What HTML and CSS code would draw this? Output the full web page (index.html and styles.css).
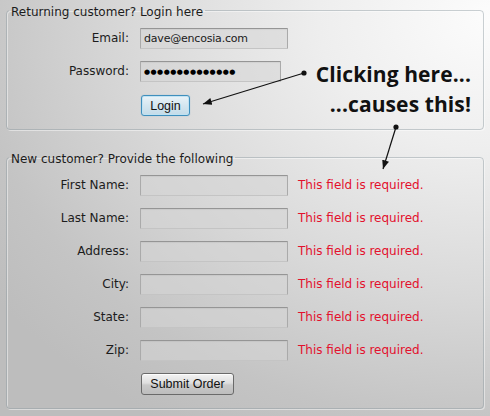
FILE: index.html
```html
<!DOCTYPE html>
<html>
<head>
<meta charset="utf-8">
<link rel="stylesheet" href="styles.css">
</head>
<body>
<div class="page">
  <fieldset class="box box-login">
    <legend>Returning customer? Login here</legend>
    <div class="grid">
      <label class="lbl">Email:</label>
      <input class="field" type="text" value="dave@encosia.com">
      <span></span>
      <label class="lbl">Password:</label>
      <input class="field field-pass" type="text" value="●●●●●●●●●●●●●●">
      <span></span>
      <span></span>
      <div class="btn-cell"><button class="btn btn-login">Login</button></div>
      <span></span>
    </div>
  </fieldset>

  <fieldset class="box box-new">
    <legend>New customer? Provide the following</legend>
    <div class="grid">
      <label class="lbl">First Name:</label>
      <input class="field" type="text">
      <span class="err">This field is required.</span>
      <label class="lbl">Last Name:</label>
      <input class="field" type="text">
      <span class="err">This field is required.</span>
      <label class="lbl">Address:</label>
      <input class="field" type="text">
      <span class="err">This field is required.</span>
      <label class="lbl">City:</label>
      <input class="field" type="text">
      <span class="err">This field is required.</span>
      <label class="lbl">State:</label>
      <input class="field" type="text">
      <span class="err">This field is required.</span>
      <label class="lbl">Zip:</label>
      <input class="field" type="text">
      <span class="err">This field is required.</span>
      <span></span>
      <div class="btn-cell"><button class="btn btn-submit">Submit Order</button></div>
      <span></span>
    </div>
  </fieldset>

  <div class="annot">
    <svg class="arrows" width="490" height="416" viewBox="0 0 490 416">
      <defs>
        <marker id="head" viewBox="0 0 10 8" refX="10" refY="4" markerWidth="9" markerHeight="7" markerUnits="userSpaceOnUse" orient="auto">
          <path d="M0 0 L10 4 L0 8 Z" fill="#111"/>
        </marker>
      </defs>
      <line x1="304" y1="73" x2="203" y2="104" stroke="#111" stroke-width="1.2" marker-end="url(#head)"/>
      <circle cx="304" cy="73" r="2.6" fill="#111"/>
      <line x1="396" y1="127" x2="383" y2="169" stroke="#111" stroke-width="1.2" marker-end="url(#head)"/>
      <circle cx="396" cy="127" r="2.6" fill="#111"/>
    </svg>
    <div class="callout">
      <div>Clicking here...</div>
      <div>...causes this!</div>
    </div>
  </div>
</div>
</body>
</html>
```

FILE: styles.css
```css
html, body {
  margin: 0;
  padding: 0;
}
body {
  width: 490px;
  height: 416px;
  overflow: hidden;
  font-family: "DejaVu Sans", Verdana, sans-serif;
  font-size: 12px;
  color: #1c1c1c;
  background: radial-gradient(ellipse 125% 115% at 100% 4%, #fcfcfc 0%, #eeeeee 28%, #d9d9d9 58%, #c4c4c4 85%, #bdbdbd 100%);
}
.page {
  position: relative;
  width: 490px;
  height: 416px;
  padding: 0 6px;
  box-sizing: border-box;
}
.box {
  margin: 0;
  padding: 8px 0 13px 0;
  border: 1px solid rgba(140, 152, 160, 0.45);
  border-radius: 4px;
  box-shadow: inset 1px 1px 0 rgba(255, 255, 255, 0.45), 1px 1px 0 rgba(255, 255, 255, 0.45);
  min-width: 0;
}
.box legend {
  margin-left: 2px;
  padding: 5px 2px 0 2px;
  line-height: 15px;
  font-size: 12px;
  color: #1c1c1c;
}
.box-new {
  margin-top: 17px;
}
.grid {
  display: grid;
  grid-template-columns: 122px 148px auto;
  column-gap: 11px;
  row-gap: 12px;
  align-items: center;
}
.grid .err {
  margin-left: -1px;
}
.lbl {
  text-align: right;
  line-height: 21px;
}
.field {
  box-sizing: border-box;
  width: 148px;
  height: 21px;
  margin: 0;
  padding: 0 3px;
  font-family: "DejaVu Sans", Verdana, sans-serif;
  font-size: 11px;
  letter-spacing: -0.2px;
  color: #1a1a1a;
  background: rgba(214, 214, 214, 0.55);
  border: 1px solid #aaaaaa;
  border-top-color: #959595;
  border-bottom-color: #c4c4c4;
  border-radius: 1px;
  box-shadow: inset 0 1px 1px rgba(0, 0, 0, 0.05);
  outline: none;
}
.field-pass {
  width: 141px;
  font-size: 7px;
  letter-spacing: 0.45px;
  color: #000;
}
.err {
  color: #e3112d;
  line-height: 21px;
}
.btn-cell {
  display: flex;
}
.btn {
  margin: 0 0 0 1px;
  padding: 0;
  font-family: "Liberation Sans", Arial, sans-serif;
  font-size: 12.5px;
  color: #111;
  border-radius: 3px;
  cursor: pointer;
}
.btn-login {
  margin-top: 1px;
  width: 49px;
  height: 21px;
  border: 1px solid #3f8fbd;
  background: linear-gradient(#eaf3f8, #d4e6f0 50%, #c3dbe8);
  box-shadow: inset 0 0 0 1px rgba(190, 225, 242, 0.9), 0 0 1px rgba(60, 140, 190, 0.6);
}
.btn-submit {
  width: 93px;
  height: 22px;
  border: 1px solid #6a6a6a;
  background: linear-gradient(#f4f4f4, #dedede 45%, #c9c9c9 55%, #bdbdbd);
  box-shadow: inset 0 1px 0 rgba(255, 255, 255, 0.8);
}
.annot {
  position: absolute;
  left: 0;
  top: 0;
  width: 490px;
  height: 416px;
  pointer-events: none;
}
.arrows {
  position: absolute;
  left: 0;
  top: 0;
}
.callout {
  position: absolute;
  top: 59px;
  right: 19px;
  text-align: right;
  font-family: "Open Sans", "DejaVu Sans", sans-serif;
  font-weight: 700;
  font-size: 21px;
  line-height: 30px;
  color: #111;
  letter-spacing: 0.1px;
}
```
